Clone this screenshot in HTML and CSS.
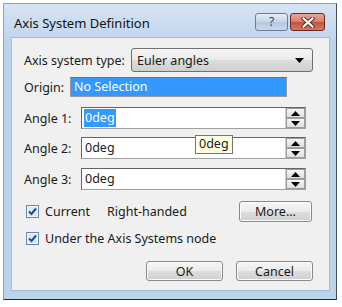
FILE: index.html
```html
<!DOCTYPE html>
<html>
<head>
<meta charset="utf-8">
<link rel="stylesheet" href="styles.css">
</head>
<body>
<div class="window">
  <div class="titlebar">
    <span class="title">Axis System Definition</span>
    <div class="caption-btns">
      <div class="cbtn help">?</div>
      <div class="cbtn close">
        <svg width="14" height="11" viewBox="0 0 14 11"><path d="M2.5 1.5 L11.5 9.5 M11.5 1.5 L2.5 9.5" stroke="#5a2a22" stroke-width="4" stroke-linecap="square"/><path d="M2.5 1.5 L11.5 9.5 M11.5 1.5 L2.5 9.5" stroke="#ffffff" stroke-width="2.2" stroke-linecap="square"/></svg>
      </div>
    </div>
  </div>
  <div class="panel">
    <div class="row r1">
      <span class="lbl w-type">Axis system type:</span>
      <div class="combo">
        <span>Euler angles</span>
        <svg class="arrow" width="9" height="5" viewBox="0 0 9 5"><path d="M0 0 H9 L4.5 5 Z" fill="#000"/></svg>
      </div>
    </div>
    <div class="row r2">
      <span class="lbl w-origin">Origin:</span>
      <div class="origin">No Selection</div>
    </div>
    <div class="row r3">
      <span class="lbl w-angle">Angle 1:</span>
      <div class="spin">
        <div class="spin-text"><span class="sel">0deg</span></div>
        <div class="spin-btns">
          <div class="sbtn"><svg width="9" height="5" viewBox="0 0 9 5"><path d="M0 5 H9 L4.5 0 Z" fill="#000"/></svg></div>
          <div class="sbtn"><svg width="9" height="5" viewBox="0 0 9 5"><path d="M0 0 H9 L4.5 5 Z" fill="#000"/></svg></div>
        </div>
      </div>
    </div>
    <div class="row r4">
      <span class="lbl w-angle">Angle 2:</span>
      <div class="spin">
        <div class="spin-text"><span>0deg</span></div>
        <div class="spin-btns">
          <div class="sbtn"><svg width="9" height="5" viewBox="0 0 9 5"><path d="M0 5 H9 L4.5 0 Z" fill="#000"/></svg></div>
          <div class="sbtn"><svg width="9" height="5" viewBox="0 0 9 5"><path d="M0 0 H9 L4.5 5 Z" fill="#000"/></svg></div>
        </div>
      </div>
      <div class="tooltip">0deg</div>
    </div>
    <div class="row r5">
      <span class="lbl w-angle">Angle 3:</span>
      <div class="spin">
        <div class="spin-text"><span>0deg</span></div>
        <div class="spin-btns">
          <div class="sbtn"><svg width="9" height="5" viewBox="0 0 9 5"><path d="M0 5 H9 L4.5 0 Z" fill="#000"/></svg></div>
          <div class="sbtn"><svg width="9" height="5" viewBox="0 0 9 5"><path d="M0 0 H9 L4.5 5 Z" fill="#000"/></svg></div>
        </div>
      </div>
    </div>
    <div class="row r6">
      <svg class="chk" width="13" height="13" viewBox="0 0 13 13"><rect x="0.5" y="0.5" width="12" height="12" fill="#f4f8fc" stroke="#6b86a8"/><rect x="2" y="2" width="9" height="9" fill="#dce8f4"/><path d="M3 6.5 L5.5 9 L10 3.5" fill="none" stroke="#1e4d9a" stroke-width="2"/></svg>
      <span class="chk-lbl current">Current</span>
      <span class="handed">Right-handed</span>
      <div class="btn more">More...</div>
    </div>
    <div class="row r7">
      <svg class="chk" width="13" height="13" viewBox="0 0 13 13"><rect x="0.5" y="0.5" width="12" height="12" fill="#f4f8fc" stroke="#6b86a8"/><rect x="2" y="2" width="9" height="9" fill="#dce8f4"/><path d="M3 6.5 L5.5 9 L10 3.5" fill="none" stroke="#1e4d9a" stroke-width="2"/></svg>
      <span class="chk-lbl">Under the Axis Systems node</span>
    </div>
    <div class="row r8">
      <div class="btn ok">OK</div>
      <div class="btn cancel">Cancel</div>
    </div>
  </div>
</div>
</body>
</html>
```
FILE: styles.css
```css
html, body {
  margin: 0;
  padding: 0;
  background: #ffffff;
}
body {
  padding: 3px 0 0 3px;
  font-family: "Noto Sans", "Noto Sans CJK KR", sans-serif;
  font-size: 12.5px;
  color: #1a1a1a;
}
.window {
  width: 334px;
  height: 297px;
  box-sizing: border-box;
  border: 1px solid #8da3bd;
  border-right-color: #3d4b5c;
  border-bottom-color: #1a2a36;
  background: linear-gradient(#d7e4f3, #bdd3ec 40px, #bcd3ec);
  display: flex;
  flex-direction: column;
}
.titlebar {
  height: 33px;
  flex: none;
  display: flex;
  align-items: flex-start;
  justify-content: space-between;
}
.title {
  margin: 11px 0 0 10px;
  font-size: 13px;
  line-height: 16px;
  color: #111;
}
.caption-btns {
  display: flex;
  gap: 2px;
  margin: 9px 11px 0 0;
}
.cbtn {
  height: 18px;
  box-sizing: border-box;
  border: 1px solid #6d7e94;
  border-radius: 3px;
  display: flex;
  align-items: center;
  justify-content: center;
}
.help {
  width: 33px;
  background: linear-gradient(#e3ecf7, #c5d6ea 50%, #b3c8e0 51%, #c8d9ed);
  font-size: 12px;
  color: #33475e;
  line-height: 16px;
}
.close {
  width: 35px;
  border-color: #6a2a22;
  background: linear-gradient(#e9a99b, #d47a69 50%, #c4513d 51%, #d47b62);
}
.panel {
  margin: 0 6px 8px 7px;
  flex: 1;
  background: #f0f0f0;
  border: 1px solid #a6bbd4;
  padding: 0 16px 0 12px;
  display: flex;
  flex-direction: column;
}
.row {
  display: flex;
  align-items: center;
  flex: none;
  position: relative;
}
.lbl {
  flex: none;
  white-space: nowrap;
}
.w-type { width: 107px; }
.w-origin { width: 46px; }
.w-angle { width: 57px; }
.r1 { margin-top: 10px; height: 24px; }
.r2 { margin-top: 5px; height: 20px; }
.r3 { margin-top: 10px; height: 22px; }
.r4 { margin-top: 8px; height: 22px; }
.r5 { margin-top: 9px; height: 22px; }
.r6 { margin-top: 11px; height: 21px; }
.r7 { margin-top: 7px; height: 18px; }
.r8 { margin-top: 14px; height: 20px; justify-content: flex-end; gap: 13px; }

.combo {
  width: 182px;
  height: 24px;
  box-sizing: border-box;
  border: 1px solid #707070;
  border-radius: 3px;
  background: linear-gradient(#f4f4f4, #ebebeb 50%, #dddddd 51%, #cfcfcf);
  display: flex;
  align-items: center;
  justify-content: space-between;
  padding: 0 8px 0 5px;
}
.origin {
  width: 217px;
  height: 20px;
  box-sizing: border-box;
  border: 1px solid #9a9a9a;
  border-top-color: #6f6f6f;
  background: #3399ff;
  color: #fff;
  padding-left: 3px;
  line-height: 18px;
}
.spin {
  width: 225px;
  height: 22px;
  box-sizing: border-box;
  border: 1px solid #a0a0a0;
  border-top-color: #646464;
  border-left-color: #646464;
  background: #fff;
  display: flex;
}
.spin-text {
  flex: 1;
  padding-left: 2px;
  line-height: 20px;
  display: flex;
  align-items: center;
}
.spin-text span {
  line-height: 18px;
  padding: 0 1px;
}
.spin-text .sel {
  background: #3399ff;
  color: #fff;
}
.spin-btns {
  width: 19px;
  display: flex;
  flex-direction: column;
  border-left: 1px solid #d0d0d0;
}
.sbtn {
  flex: 1;
  box-sizing: border-box;
  border: 1px solid #9c9c9c;
  background: linear-gradient(#f6f6f6, #dedede);
  display: flex;
  align-items: center;
  justify-content: center;
}
.tooltip {
  position: absolute;
  left: 171px;
  top: -2px;
  width: 38px;
  height: 19px;
  box-sizing: border-box;
  border: 1px solid #767676;
  background: #ffffe1;
  color: #222;
  padding-left: 3px;
  line-height: 16px;
}
.chk {
  flex: none;
  margin-left: 2px;
}
.chk-lbl {
  margin-left: 6px;
  white-space: nowrap;
}
.current { width: 62px; }
.handed { white-space: nowrap; }
.btn {
  height: 21px;
  box-sizing: border-box;
  border: 1px solid #8a8a8a;
  border-radius: 3px;
  background: linear-gradient(#f6f6f6, #ebebeb 50%, #dddddd 51%, #d0d0d0);
  display: flex;
  align-items: center;
  justify-content: center;
  box-shadow: inset 0 0 0 1px #fbfbfb;
}
.more {
  width: 73px;
  margin-left: auto;
  margin-right: 1px;
}
.ok, .cancel {
  width: 77px;
  height: 20px;
}
```
